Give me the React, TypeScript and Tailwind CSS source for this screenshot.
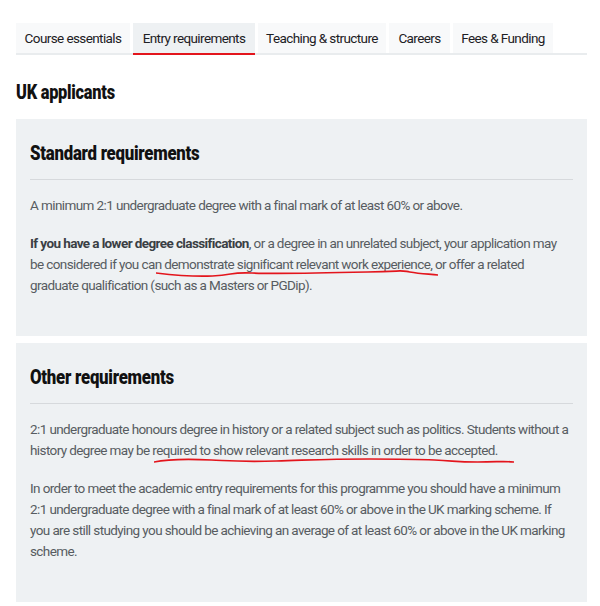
import React from "react";

const tabs = [
  { label: "Course essentials", w: "w-[114px]" },
  { label: "Entry requirements", w: "w-[122px]", active: true },
  { label: "Teaching & structure", w: "w-[128px]" },
  { label: "Careers", w: "w-[61px]" },
  { label: "Fees & Funding", w: "w-[100px]" },
];

const body = "font-['Roboto','Liberation_Sans',sans-serif] text-[13.5px] tracking-[-0.6px]";
const heading = "inline-block origin-left scale-x-[0.84] font-['Roboto','Liberation_Sans',sans-serif] font-black tracking-[-0.3px] text-[#111]";

// hand-drawn red annotation under a phrase
function Scribble({ d, className }: { d: string; className: string }) {
  return (
    <svg
      className={`pointer-events-none absolute top-[16px] block h-[10px] max-w-none ${className}`}
      viewBox="0 0 100 10"
      preserveAspectRatio="none"
    >
      <path d={d} fill="none" stroke="#e3151c" strokeWidth="1.7" vectorEffect="non-scaling-stroke" strokeLinecap="round" />
    </svg>
  );
}

function Panel({ title, children }: { title: string; children: React.ReactNode }) {
  return (
    <section className="bg-[#eef1f3] px-[14px] pb-[40px] pt-[22px]">
      <h3 className="h-[24px] whitespace-nowrap text-[20px] leading-[24px]">
        <span className={heading}>{title}</span>
      </h3>
      <div className="mt-[14px] border-t border-[#d6d9dc]" />
      <div className={`${body} mt-[15px] space-y-[17px] leading-[21px] text-[#575c61]`}>{children}</div>
    </section>
  );
}

export default function App() {
  return (
    <div className="min-h-[606px] w-[600px] bg-white px-4 pt-[23px]">
      {/* Tabs */}
      <div className="flex w-[571px] gap-[3px] border-b-2 border-[#e9ecee]">
        {tabs.map((t) => (
          <div
            key={t.label}
            className={`${t.w} ${body} relative flex h-[30px] items-center justify-center whitespace-nowrap text-[#1d2024] ${
              t.active ? "bg-[#eef1f3]" : "bg-[#f8f9fa]"
            }`}
          >
            {t.label}
            {t.active && <div className="absolute -bottom-[2px] left-0 right-0 h-[2px] bg-[#e3151c]" />}
          </div>
        ))}
      </div>

      <h2 className="mt-[24px] h-[26px] whitespace-nowrap text-[19.5px] leading-[26px]">
        <span className={heading}>UK applicants</span>
      </h2>

      <div className="mt-[14px] w-[571px] space-y-[7px]">
        <Panel title="Standard requirements">
          <p>A minimum 2:1 undergraduate degree with a final mark of at least 60% or above.</p>
          <p>
            <b className="font-bold text-[#3a3f44]">If you have a lower degree classification</b>, or a degree in an
            unrelated subject, your application may
            <br />
            be considered if you{" "}
            <span className="relative inline-block">
              can demonstrate significant relevant work experience,
              <Scribble
                className="left-[15px] w-[calc(100%-9px)]"
                d="M0 3 C 6 5, 12 7, 20 6 S 26 2, 34 3 S 60 3, 75 2 S 86 0, 90 2 S 97 4, 100 5"
              />
            </span>{" "}
            or offer a related
            <br />
            graduate qualification (such as a Masters or PGDip).
          </p>
        </Panel>
        <Panel title="Other requirements">
          <p>
            2:1 undergraduate honours degree in history or a related subject such as politics. Students without a
            <br />
            history degree may be{" "}
            <span className="relative inline-block">
              required to show relevant research skills in order to be accepted.
              <Scribble
                className="left-[2px] w-[calc(100%+14px)]"
                d="M0 6 C 4 3, 10 3, 16 4 S 24 6, 34 5 S 48 3, 60 3 S 72 3, 78 4 S 84 6, 90 6 S 97 5, 100 6"
              />
            </span>
          </p>
          <p>
            In order to meet the academic entry requirements for this programme you should have a minimum
            <br />
            2:1 undergraduate degree with a final mark of at least 60% or above in the UK marking scheme. If
            <br />
            you are still studying you should be achieving an average of at least 60% or above in the UK marking
            <br />
            scheme.
          </p>
        </Panel>
      </div>
    </div>
  );
}
